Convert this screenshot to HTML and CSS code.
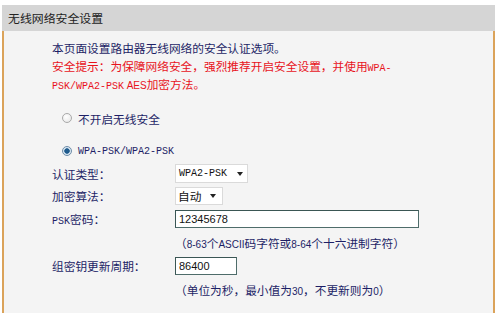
FILE: index.html
```html
<!DOCTYPE html>
<html lang="zh-CN">
<head>
<meta charset="utf-8">
<title>无线网络安全设置</title>
<link rel="stylesheet" href="styles.css">
</head>
<body>
<div class="panel">
  <div class="panel-head">无线网络安全设置</div>
  <div class="panel-body">
    <div class="intro">
      <p class="line">本页面设置路由器无线网络的安全认证选项。</p>
      <p class="line warn">安全提示：为保障网络安全，强烈推荐开启安全设置，并使用<span class="mono">WPA-</span></p>
      <p class="line warn"><span class="mono">PSK/WPA2-PSK</span> <span class="lat">AES</span>加密方法。</p>
    </div>
    <div class="radio-row first">
      <span class="radio"></span>
      <span>不开启无线安全</span>
    </div>
    <div class="radio-row second">
      <span class="radio checked"></span>
      <span class="mono">WPA-PSK/WPA2-PSK</span>
    </div>
    <div class="form">
      <div class="row r1">
        <span class="label">认证类型：</span>
        <span class="select"><span class="mono">WPA2-PSK</span><span class="caret"></span></span>
      </div>
      <div class="row r2">
        <span class="label">加密算法：</span>
        <span class="select"><span>自动</span><span class="caret"></span></span>
      </div>
      <div class="row r3">
        <span class="label"><span class="mono">PSK</span>密码：</span>
        <input class="field wide" type="text" value="12345678">
      </div>
      <div class="hint h1">（<span class="lat">8-63</span>个<span class="lat">ASCII</span>码字符或<span class="lat">8-64</span>个十六进制字符）</div>
      <div class="row r4">
        <span class="label">组密钥更新周期：</span>
        <input class="field short" type="text" value="86400">
      </div>
      <div class="hint h2">（单位为秒，最小值为<span class="lat">30</span>，不更新则为<span class="lat">0</span>）</div>
    </div>
  </div>
</div>
</body>
</html>
```
FILE: styles.css
```css
* { box-sizing: border-box; }
html, body { margin: 0; padding: 0; background: #ffffff; }
body {
  font-family: "Noto Sans CJK SC", "Liberation Sans", sans-serif;
  font-size: 11.7px;
  color: #1d1f66;
  overflow: hidden;
  height: 313px;
}
.panel {
  margin: 5px 0 0 2px;
  width: 493px;
}
.panel-head {
  height: 26px;
  line-height: 26px;
  background: #d5d5d5;
  color: #222222;
  padding-left: 6px;
  font-size: 11.9px;
}
.panel-body {
  background: #f4f4f4;
  border-left: 2px solid #dba35a;
  border-right: 2px solid #dba35a;
  height: 290px;
  padding: 8px 0 0 48px;
}
.intro .line {
  margin: 0;
  height: 18px;
  line-height: 18px;
  white-space: nowrap;
}
.warn { color: #e8131c; }
.mono {
  font-family: "Liberation Mono", monospace;
  font-size: 10px;
}
.lat {
  font-family: "Liberation Sans", sans-serif;
  font-size: 10px;
}
.radio-row {
  display: flex;
  align-items: center;
  height: 18px;
  padding-left: 10px;
  gap: 6px;
}
.radio-row.first { margin-top: 16px; }
.radio-row.second { margin-top: 15px; }
.radio {
  width: 10px;
  height: 10px;
  border-radius: 50%;
  border: 1px solid #a9a9a9;
  background: radial-gradient(circle at 40% 35%, #ffffff 0%, #e4e4e4 100%);
  flex: none;
}
.radio.checked {
  border-color: #6d8ca8;
  background: radial-gradient(circle, #1e5a8c 0 2.4px, #cfe0ee 3px, #f6f9fc 100%);
}
.form { margin-top: 4px; }
.row {
  display: flex;
  align-items: center;
  height: 19px;
}
.row.r2 { margin-top: 3px; }
.row.r3 { margin-top: 4px; }
.row.r4 { margin-top: 4px; }
.label {
  width: 123px;
  flex: none;
  white-space: nowrap;
}
.select {
  display: inline-flex;
  align-items: center;
  height: 19px;
  background: #ffffff;
  border: 1px solid #dadada;
  padding: 0 4px 0 3px;
  gap: 10px;
  color: #111111;
}
.r2 .select { height: 18px; gap: 9px; padding: 0 6px 0 2px; }
.caret {
  width: 0;
  height: 0;
  border-left: 3.5px solid transparent;
  border-right: 3.5px solid transparent;
  border-top: 4px solid #222222;
}
.field {
  height: 18px;
  margin: 0;
  border: 1px solid #4e6c6a;
  border-top-color: #3a5654;
  border-left-color: #3a5654;
  background: #ffffff;
  font-family: "Liberation Sans", sans-serif;
  font-size: 11px;
  color: #111111;
  padding: 0 3px;
  outline: none;
}
.field.wide { width: 244px; }
.field.short { width: 62px; }
.hint {
  height: 18px;
  line-height: 18px;
  padding-left: 123px;
  white-space: nowrap;
}
.hint.h1 { margin-top: 6px; }
.hint.h2 { margin-top: 6px; }
```
